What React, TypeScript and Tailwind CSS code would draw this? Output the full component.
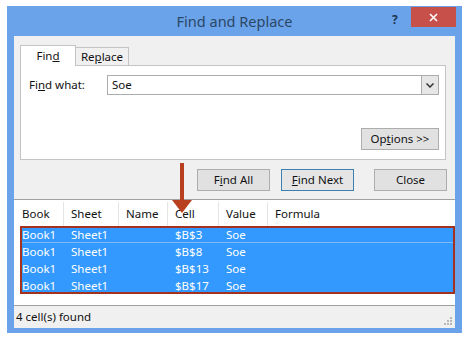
import React from 'react'

const font = { fontFamily: '"Noto Sans", "Open Sans", sans-serif' }

const rows = [
  { book: 'Book1', sheet: 'Sheet1', cell: '$B$3', value: 'Soe' },
  { book: 'Book1', sheet: 'Sheet1', cell: '$B$8', value: 'Soe' },
  { book: 'Book1', sheet: 'Sheet1', cell: '$B$13', value: 'Soe' },
  { book: 'Book1', sheet: 'Sheet1', cell: '$B$17', value: 'Soe' },
]

function Btn({ children, primary }: { children: React.ReactNode; primary?: boolean }) {
  return (
    <div
      className={`w-[73px] h-[22px] flex items-center justify-center text-[11.5px] text-[#111] ${
        primary ? 'border border-[#3c7fb1] bg-[#e5e5e5]' : 'border border-[#adadad] bg-[#e1e1e1]'
      }`}
    >
      {children}
    </div>
  )
}

export default function App() {
  return (
    <div className="relative w-[467px] h-[339px] bg-white pt-[6px] pl-[7px]" style={font}>
      {/* window */}
      <div className="w-[455px] h-[327px] bg-[#6aa3e9] flex flex-col">
        {/* title bar */}
        <div className="relative h-[30px] flex items-center justify-center">
          <span className="text-[14.5px] text-[#2b4766] pt-px">Find and Replace</span>
          <span className="absolute left-[385px] top-[5px] text-[12px] font-bold text-[#1d3451]">?</span>
          <div className="absolute right-[6px] top-[1px] w-[45px] h-[20px] bg-[#c8504b] flex items-center justify-center">
            <svg width="9" height="9" viewBox="0 0 9 9">
              <path d="M1 1 L8 8 M8 1 L1 8" stroke="white" strokeWidth="1.6" />
            </svg>
          </div>
        </div>

        {/* client */}
        <div className="mx-[7px] h-[292px] bg-[#f0f0f0] flex flex-col text-[11.5px]">
          {/* tabs */}
          <div className="mt-[8px] ml-[6px] mr-[9px]">
            <div className="flex items-end h-[21px]">
              <div className="w-[56px] h-[21px] bg-white border border-b-0 border-[#c4c4c4] flex items-center justify-center text-[#111] relative z-10 -mb-px pb-px">
                <span>
                  Fin<u>d</u>
                </span>
              </div>
              <div className="w-[53px] h-[18px] bg-[#f0f0f0] border border-l-0 border-b-0 border-[#c4c4c4] flex items-center justify-center text-[#111]">
                <span>
                  Re<u>p</u>lace
                </span>
              </div>
            </div>
            <div className="h-[95px] bg-white border border-[#c4c4c4] flex flex-col pl-[8px] pr-[6px] pt-[9px]">
              <div className="flex items-center h-[20px]">
                <span className="w-[78px] text-[#111]">
                  Fi<u>n</u>d what:
                </span>
                <div className="flex-1 h-[20px] border border-[#acacac] flex items-stretch">
                  <span className="flex-1 pl-[4px] leading-[18px] text-[#111]">Soe</span>
                  <div className="w-[17px] bg-[#e6e6e6] border-l border-[#acacac] flex items-center justify-center">
                    <svg width="8" height="5" viewBox="0 0 8 5">
                      <path d="M0.5 0.5 L4 4 L7.5 0.5" stroke="#333" strokeWidth="1.5" fill="none" />
                    </svg>
                  </div>
                </div>
              </div>
              <div className="flex justify-end mt-[33px]">
                <div className="w-[78px] h-[22px] border border-[#adadad] bg-[#e1e1e1] flex items-center justify-center text-[#111]">
                  <span>
                    Op<u>t</u>ions &gt;&gt;
                  </span>
                </div>
              </div>
            </div>
          </div>

          {/* buttons */}
          <div className="flex justify-end mt-[9px] mr-[8px]">
            <Btn>
              F<u>i</u>nd All
            </Btn>
            <div className="w-[11px]" />
            <Btn primary>
              <u>F</u>ind Next
            </Btn>
            <div className="w-[20px]" />
            <Btn>Close</Btn>
          </div>

          {/* results list */}
          <div className="mt-[8px] h-[107px] bg-white border-t border-b border-[#a0a0a0] flex flex-col">
            <div className="h-[26px] flex items-center text-[#111] pt-[2px]">
              <div className="w-[50px] pl-[8px] border-r border-[#e5e5e5] h-full flex items-center">Book</div>
              <div className="w-[55px] pl-[7px] border-r border-[#e5e5e5] h-full flex items-center">Sheet</div>
              <div className="w-[49px] pl-[7px] border-r border-[#e5e5e5] h-full flex items-center">Name</div>
              <div className="w-[51px] pl-[7px] border-r border-[#e5e5e5] h-full flex items-center">Cell</div>
              <div className="w-[49px] pl-[7px] border-r border-[#e5e5e5] h-full flex items-center">Value</div>
              <div className="pl-[7px] h-full flex items-center">Formula</div>
            </div>
            <div className="relative ml-[6px]">
              {rows.map((r, i) => (
                <div
                  key={i}
                  className={`h-[17px] bg-[#3399ff] flex items-center text-white pt-px ${
                    i === 0 ? 'border-b border-[#7db9f2]' : ''
                  }`}
                >
                  <div className="w-[44px] pl-[2px]">{r.book}</div>
                  <div className="w-[55px] pl-[7px]">{r.sheet}</div>
                  <div className="w-[49px] pl-[7px]"></div>
                  <div className="w-[51px] pl-[7px]">{r.cell}</div>
                  <div className="w-[49px] pl-[7px]">{r.value}</div>
                </div>
              ))}
              <div className="absolute inset-0 border-2 border-[#a5321f]" />
            </div>
          </div>

          {/* status bar */}
          <div className="relative flex-1 flex items-center pl-[2px] text-[#111]">
            4 cell(s) found
            <svg className="absolute right-[2px] bottom-[2px]" width="10" height="10" viewBox="0 0 10 10">
              <g fill="#b8b8b8">
                <rect x="7" y="1" width="2" height="2" />
                <rect x="4" y="4" width="2" height="2" />
                <rect x="7" y="4" width="2" height="2" />
                <rect x="1" y="7" width="2" height="2" />
                <rect x="4" y="7" width="2" height="2" />
                <rect x="7" y="7" width="2" height="2" />
              </g>
            </svg>
          </div>
        </div>
      </div>

      {/* annotation arrow */}
      <svg className="absolute left-[172px] top-[163px]" width="20" height="51" viewBox="0 0 20 51">
        <rect x="8" y="0" width="4" height="40" fill="#b8401f" />
        <path d="M0 37 L20 37 L10 50 Z" fill="#b8401f" />
      </svg>
    </div>
  )
}
